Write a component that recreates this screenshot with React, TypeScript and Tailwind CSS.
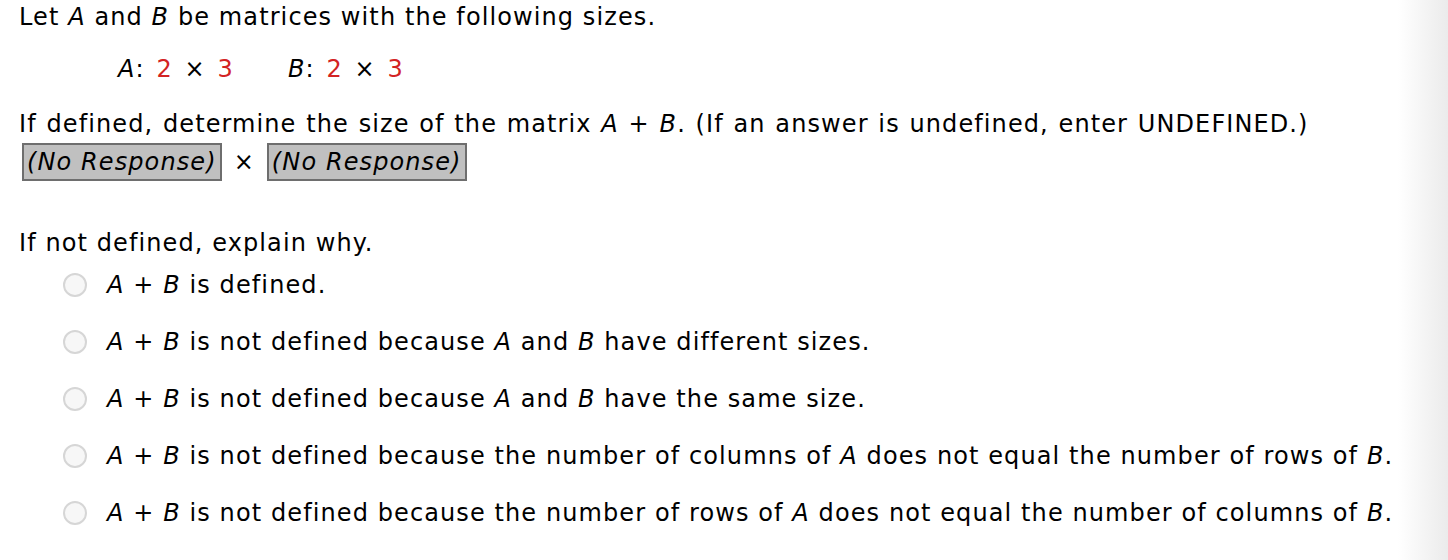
import React from 'react';

const options = [
  <>is defined.</>,
  <>is not defined because <i>A</i> and <i>B</i> have different sizes.</>,
  <>is not defined because <i>A</i> and <i>B</i> have the same size.</>,
  <>is not defined because the number of columns of <i>A</i> does not equal the number of rows of <i>B</i>.</>,
  <>is not defined because the number of rows of <i>A</i> does not equal the number of columns of <i>B</i>.</>,
];

function NoResponse() {
  return (
    <span className="inline-flex h-[38px] items-center border-2 border-[#6e6e6e] bg-[#c0c0c0] px-[3px] italic">
      (No Response)
    </span>
  );
}

export default function App() {
  return (
    <div
      className="h-[560px] w-[1448px] overflow-hidden bg-[linear-gradient(to_right,#ffffff_1398px,#ebebeb)] pl-[19px] pt-[3px] text-[24px] leading-[28px] tracking-[1.1px] text-black"
      style={{ fontFamily: '"DejaVu Sans", Verdana, sans-serif' }}
    >
      <p>
        Let <i>A</i> and <i>B</i> be matrices with the following sizes.
      </p>

      <div className="mt-[24px] flex gap-[54px] pl-[99px] [word-spacing:3px]">
        <span>
          <i>A</i>: <span className="text-[#d32323]">2</span> × <span className="text-[#d32323]">3</span>
        </span>
        <span>
          <i>B</i>: <span className="text-[#d32323]">2</span> × <span className="text-[#d32323]">3</span>
        </span>
      </div>

      <p className="mt-[27px] [word-spacing:1px]">
        If defined, determine the size of the matrix <i>A</i> + <i>B</i>. (If an answer is undefined, enter UNDEFINED.)
      </p>

      <div className="mt-[5px] flex items-center pl-[3px]">
        <NoResponse />
        <span className="mx-[12px]">×</span>
        <NoResponse />
      </div>

      <p className="mt-[48px]">If not defined, explain why.</p>

      <ul className="mt-[14px] flex flex-col gap-[29px] pl-[44px]">
        {options.map((opt, i) => (
          <li key={i} className="flex items-center">
            <span className="h-[24px] w-[24px] shrink-0 rounded-full border-2 border-[#d6d6d6] bg-[#f7f7f7]" />
            <span className="ml-[20px]">
              <i>A</i> + <i>B</i> {opt}
            </span>
          </li>
        ))}
      </ul>
    </div>
  );
}
